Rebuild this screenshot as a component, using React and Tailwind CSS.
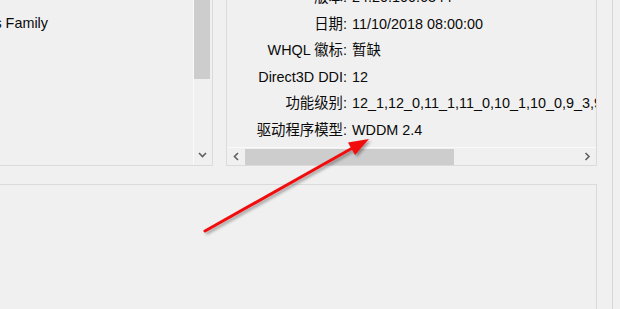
import React from "react";

const rows = [
  ["版本:", "24.20.100.6344"],
  ["日期:", "11/10/2018 08:00:00"],
  ["WHQL 徽标:", "暂缺"],
  ["Direct3D DDI:", "12"],
  ["功能级别:", "12_1,12_0,11_1,11_0,10_1,10_0,9_3,9_2,9_1"],
  ["驱动程序模型:", "WDDM 2.4"],
];

const Chevron = ({ dir }) => {
  const pts = {
    down: "1,1 4.5,4.5 8,1",
    left: "5,1 1.5,4.5 5,8",
    right: "1.5,1 5,4.5 1.5,8",
  }[dir];
  const size = dir === "down" ? { w: 9, h: 6 } : { w: 7, h: 9 };
  return (
    <svg width={size.w} height={size.h} viewBox={`0 0 ${size.w} ${size.h}`}>
      <polyline points={pts} fill="none" stroke="#606060" strokeWidth="1.6" />
    </svg>
  );
};

export default function App() {
  return (
    <div
      className="relative w-[620px] h-[309px] overflow-hidden bg-[#f0f0f0] flex text-[14.4px] text-[#0a0a0a]"
      style={{ fontFamily: '"Liberation Sans", "Noto Sans CJK SC", sans-serif' }}
    >
      {/* main column */}
      <div className="w-[612px] flex flex-col">
        {/* top row with the two list panels */}
        <div className="h-[166px] flex">
          {/* left panel */}
          <div className="w-[213px] flex border-r border-b border-[#dadada]">
            <div className="flex-1 overflow-hidden">
              <div className="mt-[11px] w-[48px] h-[26px] flex items-center justify-end whitespace-nowrap">
                Intel(R) UHD Graphics Family
              </div>
            </div>
            <div className="w-[19px] flex flex-col border-l border-[#fafafa]">
              <div className="h-[79px] w-[16px] bg-[#cdcdcd]" />
              <div className="flex-1" />
              <div className="h-[20px] flex items-center justify-center pr-[1px]">
                <Chevron dir="down" />
              </div>
            </div>
          </div>

          {/* right panel */}
          <div className="ml-[13px] w-[371px] flex flex-col border-l border-r border-b border-[#dadada]">
            <div className="flex-1 overflow-hidden">
              <div className="-mt-[15px]">
                {rows.map(([label, value]) => (
                  <div key={label} className="h-[26.5px] flex items-center whitespace-nowrap">
                    <div className="w-[120px] shrink-0 text-right">{label}</div>
                    <div className="pl-[5px]">{value}</div>
                  </div>
                ))}
              </div>
            </div>
            <div className="h-[18px] flex items-center border-t border-[#fafafa]">
              <div className="w-[18px] flex justify-center">
                <Chevron dir="left" />
              </div>
              <div className="w-[209px] h-[16px] bg-[#cdcdcd]" />
              <div className="flex-1" />
              <div className="w-[18px] flex justify-center">
                <Chevron dir="right" />
              </div>
            </div>
          </div>
        </div>

        {/* bottom panel */}
        <div className="mt-[18px] w-[597px] flex-1 border-t border-r border-[#dadada]" />
      </div>

      {/* outer edge */}
      <div className="w-px bg-[#d6d6d6]" />

      {/* annotation arrow */}
      <svg className="absolute inset-0 pointer-events-none" width="620" height="309">
        <defs>
          <filter id="sh" x="-20%" y="-20%" width="140%" height="140%">
            <feDropShadow dx="2" dy="2" stdDeviation="1.5" floodColor="#000" floodOpacity="0.35" />
          </filter>
        </defs>
        <g filter="url(#sh)">
          <line x1="205" y1="231" x2="356" y2="146" stroke="#f01010" strokeWidth="3" strokeLinecap="round" />
          <polygon points="369,139 355,155 348,142.5" fill="#f01010" />
        </g>
      </svg>
    </div>
  );
}
